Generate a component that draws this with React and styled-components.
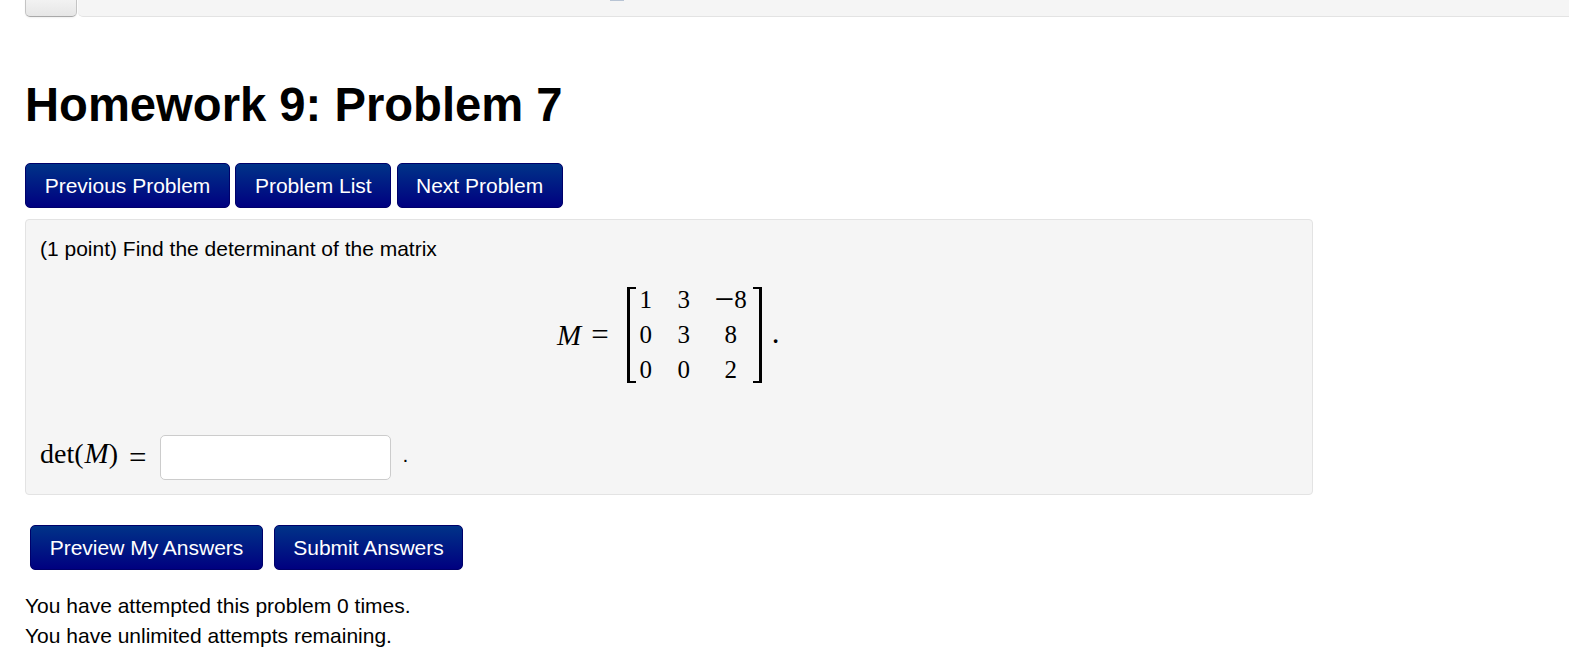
import React from 'react';
import styled, { createGlobalStyle } from 'styled-components';

const GlobalStyle = createGlobalStyle`
  html, body {
    margin: 0;
    padding: 0;
    background: #fff;
    color: #000;
    font-family: "Liberation Sans", Arial, sans-serif;
    font-size: 21px;
  }
`;

const Page = styled.div`
  width: 1569px;
  height: 659px;
  overflow: hidden;
  padding-left: 25px;
  box-sizing: border-box;
`;

const TopStrip = styled.div`
  display: flex;
  gap: 1px;
  height: 17px;
`;

const ToggleButton = styled.div`
  width: 52px;
  box-sizing: border-box;
  background: linear-gradient(#f2f2f2, #e6e6e6);
  border: 1px solid #c4c4c4;
  border-top: 0;
  border-bottom-color: #a9a9a9;
  border-radius: 0 0 5px 5px;
  box-shadow: 0 1px 2px rgba(0, 0, 0, 0.06);
`;

const Breadcrumb = styled.div`
  flex: 1;
  background: #f5f5f5;
  border-bottom: 1px solid #e3e3e3;
  border-radius: 0 0 0 5px;
`;

const CutOffIcon = styled.div`
  width: 14px;
  height: 1px;
  margin-left: 532px;
  background: #b8c4d4;
`;

const Title = styled.h1`
  margin: 59px 0 0;
  font-size: 47.2px;
  line-height: 58px;
  font-weight: 700;
`;

const ButtonRow = styled.div`
  display: flex;
  gap: ${(p) => p.$gap}px;
  margin: ${(p) => p.$margin};
`;

const NavButton = styled.button`
  height: 45px;
  width: ${(p) => p.$width}px;
  padding: 0;
  box-sizing: border-box;
  color: #fff;
  font-family: inherit;
  font-size: 21px;
  background: linear-gradient(#003388, #000080);
  border: 1px solid #00006a;
  border-radius: 5px;
`;

const ProblemPanel = styled.div`
  width: 1288px;
  height: 276px;
  margin-top: 11px;
  box-sizing: border-box;
  padding: 15px 14px 0;
  background: #f5f5f5;
  border: 1px solid #e3e3e3;
  border-radius: 4px;
  line-height: 28px;
`;

const MathFont = styled.span`
  font-family: "Liberation Serif", "Times New Roman", serif;
  font-size: 28px;
  margin-bottom: 8px;
`;

const Equation = styled.div`
  display: flex;
  align-items: center;
  height: 96px;
  margin: 24px 0 0 517px;
`;

const Italic = styled.i`
  font-family: "Liberation Serif", "Times New Roman", serif;
  font-size: 29px;
  margin-left: ${(p) => p.$left || 0}px;
`;

const MathOp = styled.span`
  font-family: "Liberation Serif", "Times New Roman", serif;
  font-size: 31px;
  line-height: 28px;
  margin: ${(p) => p.$margin};
`;

const Matrix = styled.div`
  position: relative;
  width: 135px;
  height: 96px;
  display: grid;
  grid-template-columns: 38px 38px 56px;
  grid-auto-rows: 35px;
  align-content: center;
  justify-items: center;
  align-items: center;
  font-family: "Liberation Serif", "Times New Roman", serif;
  font-size: 25px;
`;

const Minus = styled.span`
  font-size: 35px;
  line-height: 0;
  vertical-align: -3px;
`;

const Bracket = styled.span`
  position: absolute;
  top: 0;
  bottom: 0;
  width: 9px;
  box-sizing: border-box;
  border: solid #000;
  border-width: 2px 0;
  ${(p) => (p.$right ? 'right: 0; border-right-width: 3px;' : 'left: 0; border-left-width: 3px;')}
`;

const AnswerRow = styled.div`
  display: flex;
  align-items: center;
  margin-top: 52px;
`;

const AnswerInput = styled.input`
  width: 231px;
  height: 45px;
  box-sizing: border-box;
  margin: 0 12px 0 13px;
  background: #fff;
  border: 1px solid #ccc;
  border-radius: 5px;
`;

const InputTail = styled.span`
  margin-bottom: 6px;
`;

const Notice = styled.div`
  line-height: 30px;
  margin-top: ${(p) => p.$top || 0}px;
`;

const App = () => (
  <>
    <GlobalStyle />
    <Page>
      <TopStrip>
        <ToggleButton />
        <Breadcrumb>
          <CutOffIcon />
        </Breadcrumb>
      </TopStrip>
      <Title>Homework 9: Problem 7</Title>
      <ButtonRow $gap={5.3} $margin="29px 0 0">
        <NavButton $width={205}>Previous Problem</NavButton>
        <NavButton $width={156}>Problem List</NavButton>
        <NavButton $width={166}>Next Problem</NavButton>
      </ButtonRow>
      <ProblemPanel>
        <div>(1 point) Find the determinant of the matrix</div>
        <Equation>
          <Italic>M</Italic>
          <MathOp $margin="0 18px 0 10px">=</MathOp>
          <Matrix>
            <Bracket />
            <span>1</span><span>3</span><span><Minus>−</Minus>8</span>
            <span>0</span><span>3</span><span>8</span>
            <span>0</span><span>0</span><span>2</span>
            <Bracket $right />
          </Matrix>
          <MathOp $margin="0 0 4px 10px">.</MathOp>
        </Equation>
        <AnswerRow>
          <MathFont>det(<Italic $left={1}>M</Italic>)</MathFont>
          <MathOp $margin="0 0 0 11px">=</MathOp>
          <AnswerInput />
          <InputTail>.</InputTail>
        </AnswerRow>
      </ProblemPanel>
      <ButtonRow $gap={11} $margin="30px 0 0 5px">
        <NavButton $width={233}>Preview My Answers</NavButton>
        <NavButton $width={189}>Submit Answers</NavButton>
      </ButtonRow>
      <Notice $top={21}>You have attempted this problem 0 times.</Notice>
      <Notice>You have unlimited attempts remaining.</Notice>
    </Page>
  </>
);

export default App;
